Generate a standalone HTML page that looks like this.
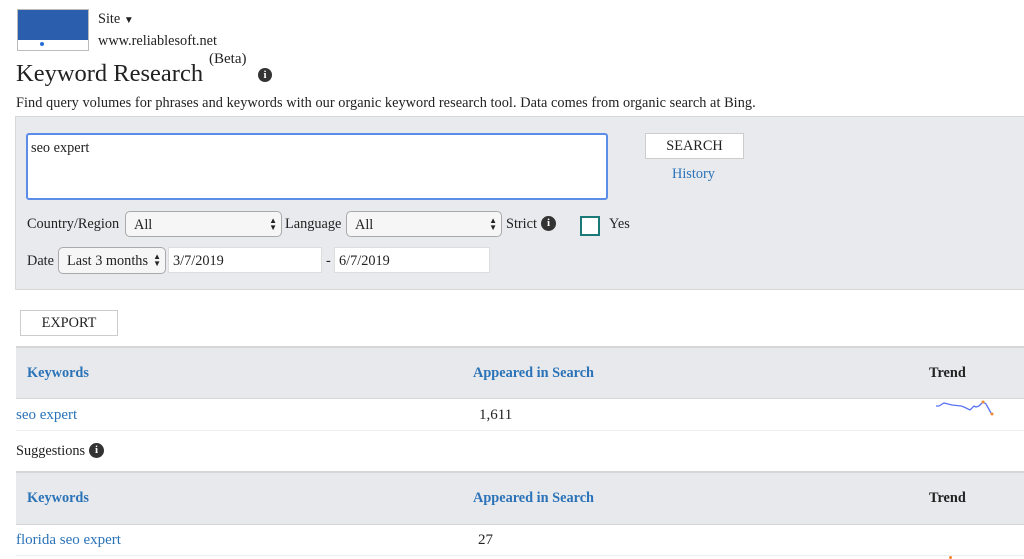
<!DOCTYPE html>
<html><head><style>
body{margin:0;width:1024px;height:559px;overflow:hidden;background:#fff;font-family:"Liberation Serif",serif;color:#222;position:relative}
.a{position:absolute}
.blue{color:#2a73b8}
.sel{position:absolute;background:#f6f6f6;border:1px solid #aaa;border-radius:5px;font-size:14.3px;box-sizing:border-box;padding:5px 8px}
.inp{position:absolute;background:#fff;border:1px solid #ddd;font-size:14.3px;box-sizing:border-box;padding:5px 4px}
.arr{position:absolute;right:4px;top:5px;font-size:8px;line-height:7px}
.hdr{position:absolute;left:16px;width:1008px;background:#e8e9ec;border-top:2px solid #d6d6d6;border-bottom:1px solid #d6d6d6}
.b{font-weight:bold;font-size:14.3px}
</style></head><body>
<div class="a" style="left:17px;top:9px;width:70px;height:40px;border:1px solid #bbb;background:#fff">
 <div style="width:70px;height:30px;background:#2b5fae"></div>
 <div style="position:absolute;left:22px;top:32px;width:4px;height:4px;border-radius:2px;background:#2a6fd6"></div>
</div>
<div class="a" style="left:98px;top:11px;font-size:14.3px">Site <span style="font-size:10px">&#9660;</span></div>
<div class="a" style="left:98px;top:33px;font-size:14.3px">www.reliablesoft.net</div>
<div class="a" style="left:16px;top:60px;font-size:24.5px">Keyword Research</div>
<div class="a" style="left:209px;top:51px;font-size:15px">(Beta)</div>
<div class="a" style="left:258px;top:68px;width:14px;height:14px;border-radius:7px;background:#333;color:#fff;font-size:11px;font-weight:bold;text-align:center;line-height:14px">i</div>
<div class="a" style="left:16px;top:95px;font-size:14.3px;letter-spacing:0.05px">Find query volumes for phrases and keywords with our organic keyword research tool. Data comes from organic search at Bing.</div>
<div class="a" style="left:15px;top:116px;width:1009px;height:172px;background:#e9eaed;border:1px solid #d8d8d8"></div>
<div class="a" style="left:26px;top:133px;width:582px;height:67px;background:#fff;border:2px solid #5b8de8;border-radius:3px;box-sizing:border-box;font-size:14.3px;padding:5px 3px">seo expert</div>
<div class="a" style="left:645px;top:133px;width:99px;height:26px;background:#fff;border:1px solid #ccc;box-sizing:border-box;font-size:14.3px;text-align:center;line-height:25px">SEARCH</div>
<div class="a blue" style="left:672px;top:166px;font-size:14.3px">History</div>
<div class="a" style="left:27px;top:216px;font-size:14.3px">Country/Region</div>
<div class="sel" style="left:125px;top:211px;width:157px;height:26px">All<span class="arr">&#9650;<br>&#9660;</span></div>
<div class="a" style="left:285px;top:216px;font-size:14.3px">Language</div>
<div class="sel" style="left:346px;top:211px;width:156px;height:26px">All<span class="arr">&#9650;<br>&#9660;</span></div>
<div class="a" style="left:506px;top:216px;font-size:14.3px">Strict</div>
<div class="a" style="left:541px;top:216px;width:15px;height:15px;border-radius:8px;background:#333;color:#fff;font-size:11px;font-weight:bold;text-align:center;line-height:15px">i</div>
<div class="a" style="left:580px;top:216px;width:20px;height:20px;border:2px solid #1b7a78;background:#fff;box-sizing:border-box"></div>
<div class="a" style="left:609px;top:216px;font-size:14.3px">Yes</div>
<div class="a" style="left:27px;top:253px;font-size:14.3px">Date</div>
<div class="sel" style="left:58px;top:247px;width:108px;height:27px">Last 3 months<span class="arr">&#9650;<br>&#9660;</span></div>
<div class="inp" style="left:168px;top:247px;width:154px;height:26px">3/7/2019</div>
<div class="a" style="left:326px;top:253px;font-size:14.3px">-</div>
<div class="inp" style="left:334px;top:247px;width:156px;height:26px">6/7/2019</div>
<div class="a" style="left:20px;top:310px;width:98px;height:26px;border:1px solid #ccc;box-sizing:border-box;font-size:14.3px;text-align:center;line-height:25px">EXPORT</div>
<div class="hdr" style="top:346px;height:50px"></div>
<div class="a b blue" style="left:27px;top:365px">Keywords</div>
<div class="a b blue" style="left:473px;top:365px">Appeared in Search</div>
<div class="a b" style="left:929px;top:365px">Trend</div>
<div class="a blue" style="left:16px;top:407px;font-size:15px">seo expert</div>
<div class="a" style="left:479px;top:407px;font-size:15px">1,611</div>
<svg class="a" style="left:930px;top:395px" width="70" height="25"><polyline points="6,11 9,11 14,8 22,10 31,11 34,12 40,15 44,11 46,12 49,11 53,7 56,9 61,18" fill="none" stroke="#5b74f0" stroke-width="1.3"/><circle cx="53" cy="7" r="1.5" fill="#f08a30"/><circle cx="62" cy="19" r="1.5" fill="#f08a30"/></svg>
<div class="a" style="left:16px;top:430px;width:1008px;border-top:1px solid #eee"></div>
<div class="a" style="left:16px;top:443px;font-size:14.3px">Suggestions</div>
<div class="a" style="left:89px;top:443px;width:15px;height:15px;border-radius:8px;background:#333;color:#fff;font-size:11px;font-weight:bold;text-align:center;line-height:15px">i</div>
<div class="hdr" style="top:471px;height:51px"></div>
<div class="a b blue" style="left:27px;top:490px">Keywords</div>
<div class="a b blue" style="left:473px;top:490px">Appeared in Search</div>
<div class="a b" style="left:929px;top:490px">Trend</div>
<div class="a blue" style="left:16px;top:532px;font-size:15px">florida seo expert</div>
<div class="a" style="left:478px;top:532px;font-size:15px">27</div>
<div class="a" style="left:16px;top:555px;width:1008px;border-top:1px solid #eee"></div>
<div class="a" style="left:949px;top:556px;width:3px;height:3px;border-radius:2px;background:#f08a30"></div>
</body></html>
